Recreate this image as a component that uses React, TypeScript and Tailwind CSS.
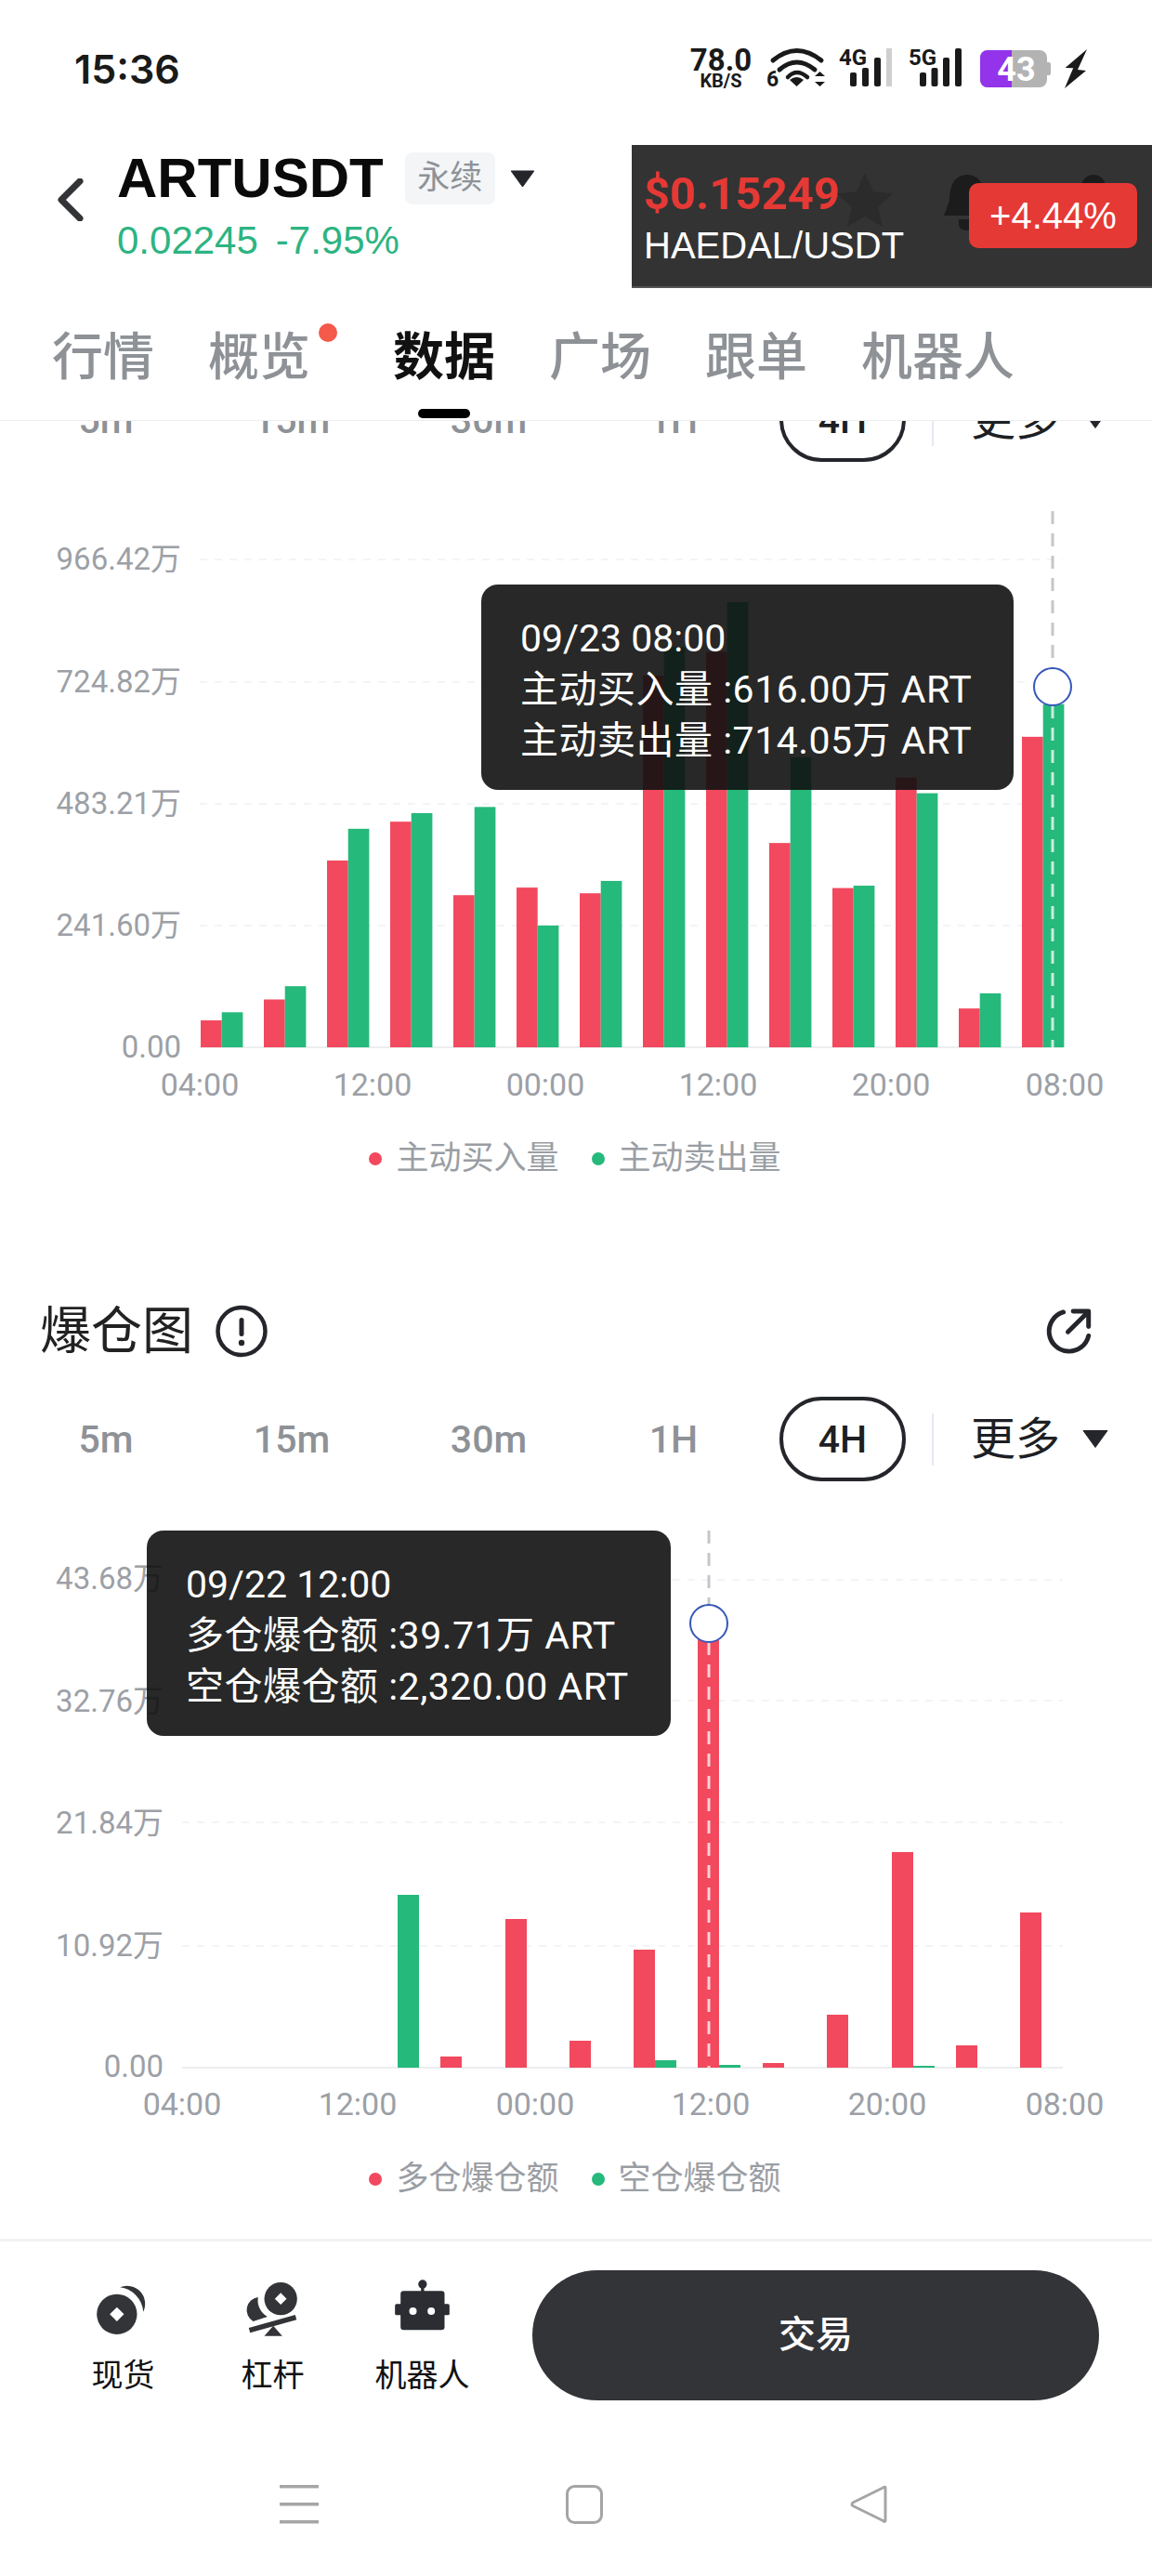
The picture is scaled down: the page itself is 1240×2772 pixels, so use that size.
import React from "react";

const RED = "#f2495e";
const GREEN = "#26b97c";

type Bar = { x: number; top: number; c: string };

const redX = [216, 284, 352, 420, 488, 556, 624, 692, 760, 828, 896, 964, 1032, 1100];
const rTop = [1172, 1128, 835, 753, 908, 892, 904, 445, 395, 798, 893, 660, 1147, 574];
const gTop = [1155, 1100, 768, 735, 722, 972, 878, 385, 290, 617, 888, 693, 1115, 505];
const toY = (v: number) => v / 1.96 + 500;

const bars1: Bar[] = redX.flatMap((x, i) => [
  { x, top: toY(rTop[i]), c: RED },
  { x: x + 22.7, top: toY(gTop[i]), c: GREEN },
]);

const bars2: Bar[] = [
  { x: 428, top: 2039, c: GREEN },
  { x: 474, top: 2213, c: RED },
  { x: 544, top: 2065, c: RED },
  { x: 613, top: 2196, c: RED },
  { x: 682, top: 2098, c: RED },
  { x: 705, top: 2217, c: GREEN },
  { x: 751, top: 1745, c: RED },
  { x: 774, top: 2222, c: GREEN },
  { x: 821, top: 2220, c: RED },
  { x: 890, top: 2168, c: RED },
  { x: 960, top: 1993, c: RED },
  { x: 983, top: 2223, c: GREEN },
  { x: 1029, top: 2201, c: RED },
  { x: 1098, top: 2058, c: RED },
];

function Chart(props: {
  top: number;
  height: number;
  base: number;
  gridLeft: number;
  labelRight: number;
  yLabels: { t: string; y: number }[];
  grid: number[];
  xLabels: { t: string; x: number }[];
  xY: number;
  bars: Bar[];
  barW: number;
  cross: { x: number; top: number; cy: number };
  tooltip: { left: number; top: number; width: number; height: number; lines: string[] };
}) {
  const { top, height, base, gridLeft, labelRight, yLabels, grid, xLabels, xY, bars, barW, cross, tooltip } = props;
  return (
    <div className="relative">
      <svg width={1240} height={height} viewBox={`0 ${top} 1240 ${height}`} className="block">
        {grid.map((y) => (
          <line key={y} x1={gridLeft} x2={1144} y1={y} y2={y} stroke="#f0f1f3" strokeWidth={1.5} strokeDasharray="8 8" />
        ))}
        <line x1={gridLeft} x2={1144} y1={base} y2={base} stroke="#eceef0" strokeWidth={2} />
        {yLabels.map((l) => (
          <text key={l.t} x={labelRight} y={l.y + 12} textAnchor="end" fontSize={33} fill="#9ca0a6">
            {l.t}
          </text>
        ))}
        {xLabels.map((l, i) => (
          <text key={i} x={l.x} y={xY + 13} textAnchor="middle" fontSize={34} fill="#9ca0a6">
            {l.t}
          </text>
        ))}
        {bars.map((b, i) => (
          <rect key={i} x={b.x} y={b.top} width={barW} height={base - b.top} fill={b.c} />
        ))}
        <line x1={cross.x} x2={cross.x} y1={cross.top} y2={cross.cy - 20} stroke="#c4c6ca" strokeWidth={3} strokeDasharray="14 10" />
        <line x1={cross.x} x2={cross.x} y1={cross.cy + 20} y2={base} stroke="#ffffff" strokeOpacity={0.75} strokeWidth={3} strokeDasharray="14 10" />
        <circle cx={cross.x} cy={cross.cy} r={20} fill="#ffffff" stroke="#3557b7" strokeWidth={2} />
      </svg>
      <div
        className="absolute rounded-[18px] bg-[#111111]/90 pl-[42px] pt-[31px] text-[41px] leading-[55px] text-white"
        style={{ left: tooltip.left, top: tooltip.top, width: tooltip.width, height: tooltip.height }}
      >
        {tooltip.lines.map((l, i) => (
          <div key={l} className={i === 0 ? "whitespace-nowrap" : "whitespace-nowrap tracking-[0.5px]"}>
            {l}
          </div>
        ))}
      </div>
    </div>
  );
}

function Legend({ a, b }: { a: string; b: string }) {
  return (
    <div className="flex h-[72px] items-center justify-center pr-[2px] pt-[2px] text-[35px] text-[#9a9ea4]">
      <span className="h-[14px] w-[14px] rounded-full bg-[#f2495e]" />
      <span className="ml-[15px]">{a}</span>
      <span className="ml-[35px] h-[14px] w-[14px] rounded-full bg-[#26b97c]" />
      <span className="ml-[15px]">{b}</span>
    </div>
  );
}

function Caret({ w, h }: { w: number; h: number }) {
  return (
    <svg width={w} height={h} viewBox="0 0 28 20" className="block">
      <path d="M1 1 H27 L14 19 Z" fill="#24262b" stroke="#24262b" strokeWidth={1} strokeLinejoin="round" />
    </svg>
  );
}

function Selector() {
  return (
    <div className="flex h-[91px] items-center pl-[14px] text-[41px] font-medium text-[#8e9297]">
      <div className="w-[200px] pt-[2px] text-center">5m</div>
      <div className="w-[200px] pt-[2px] text-center">15m</div>
      <div className="ml-[12px] w-[200px] pt-[2px] text-center">30m</div>
      <div className="w-[198px] pt-[2px] text-center">1H</div>
      <div className="ml-[15px] flex h-[91px] w-[136px] items-center justify-center rounded-full border-[4px] border-[#24262b] pt-[2px] text-[#1d1f24]">
        4H
      </div>
      <div className="ml-[28px] h-[56px] w-[2px] bg-[#e6e8f2]" />
      <div className="ml-[40px] text-[48px] font-normal text-[#1d1f24]">更多</div>
      <div className="ml-[24px]">
        <Caret w={28} h={21} />
      </div>
    </div>
  );
}

function StatusIcons() {
  return (
    <div className="ml-auto flex items-center pr-[68px]">
      <div className="flex w-[68px] flex-col items-center font-bold text-[#1a1a1a]">
        <span className="text-[33px] leading-[27px]">78.0</span>
        <span className="text-[20px] leading-[19px]">KB/S</span>
      </div>
      <svg width={70} height={70} className="ml-[10px] block" fill="none" stroke="#1a1a1a" strokeLinecap="round">
        <path d="M12 26 Q37.5 5 64 26" strokeWidth={5} />
        <path d="M19 36 Q37.5 20 57 36" strokeWidth={5} />
        <path d="M28 44 Q37.5 34 49 44" strokeWidth={4.5} />
        <path d="M30 47 Q37.5 41 45 47 L37.5 54 Z" fill="#1a1a1a" stroke="none" />
        <path d="M57 43 L62.5 38 L68 43 Z M57 49 L68 49 L62.5 54 Z" fill="#1a1a1a" stroke="none" />
        <text x={5} y={54} fontSize={23} fontWeight={700} fill="#1a1a1a" stroke="none">
          6
        </text>
      </svg>
      <svg width={62} height={70} className="ml-[10px] block">
        <text x={3} y={31} fontSize={24} fontWeight={700} fill="#1a1a1a">
          4G
        </text>
        <rect x={15} y={39} width={7} height={15} rx={2} fill="#1a1a1a" />
        <rect x={28} y={34} width={7} height={20} rx={2} fill="#1a1a1a" />
        <rect x={41} y={23} width={7} height={31} rx={2} fill="#1a1a1a" />
        <rect x={54} y={13} width={6} height={41} fill="#cfcfcf" />
      </svg>
      <svg width={62} height={70} className="ml-[13px] block">
        <text x={3} y={31} fontSize={24} fontWeight={700} fill="#1a1a1a">
          5G
        </text>
        <rect x={15} y={39} width={7} height={15} rx={2} fill="#1a1a1a" />
        <rect x={27.5} y={34} width={7} height={20} rx={2} fill="#1a1a1a" />
        <rect x={40} y={23} width={7} height={31} rx={2} fill="#1a1a1a" />
        <rect x={53} y={13} width={7} height={41} rx={2} fill="#1a1a1a" />
      </svg>
      <svg width={80} height={70} className="ml-[16px] block">
        <rect x={2} y={15} width={72} height={40} rx={8} fill="#b3b3b3" />
        <path d="M74 28 h2 a2 2 0 0 1 2 2 v10 a2 2 0 0 1 -2 2 h-2 Z" fill="#b3b3b3" />
        <path d="M36 15 H10 a8 8 0 0 0 -8 8 V47 a8 8 0 0 0 8 8 H36 Z" fill="#9333ea" />
        <text x={41} y={48} textAnchor="middle" fontSize={36} fontWeight={700} fill="#ffffff">
          43
        </text>
      </svg>
      <svg width={28} height={70} className="ml-[11px] block">
        <path d="M26 14 L2.6 34 L11.2 34.3 L2 56 L25 37 L16 36 Z" fill="#1a1a1a" />
      </svg>
    </div>
  );
}

function Header() {
  const tabs = ["行情", "概览", "数据", "广场", "跟单", "机器人"];
  return (
    <div className="relative z-10 h-[453px] border-b-[1px] border-[#eeeeee] bg-white">
      <div className="flex h-[148px] items-center">
        <div className="pl-[80px] font-['Inter',sans-serif] text-[43px] font-semibold text-[#1a1a1a]">15:36</div>
        <StatusIcons />
      </div>
      <div className="mt-[12px] flex items-center pl-[61px]">
        <svg width={30} height={46} viewBox="0 0 30 46" className="mb-[20px] block" fill="none">
          <path d="M25 3 L5 23 L25 43" stroke="#333438" strokeWidth={7} strokeLinejoin="round" strokeLinecap="round" />
        </svg>
        <div className="ml-[35px]">
          <div className="flex h-[64px] items-center">
            <span className="font-['Liberation_Sans',sans-serif] text-[60px] font-bold leading-[64px] text-[#0a0a0a]">ARTUSDT</span>
            <span className="ml-[23px] flex h-[56px] w-[97px] items-center justify-center rounded-[8px] bg-[#f3f5f7] text-[35px] text-[#8e9297]">
              永续
            </span>
            <span className="ml-[16px]">
              <Caret w={27} h={19} />
            </span>
          </div>
          <div className="flex h-[66px] items-center pt-[2px] font-['Liberation_Sans',sans-serif] text-[42px] text-[#2db482]">
            <span>0.02245</span>
            <span className="ml-[19px]">-7.95%</span>
          </div>
        </div>
      </div>
      <div className="mt-[63px] flex items-start gap-[58px] pl-[56px] text-[55px] font-medium leading-[62px] text-[#8e9297]">
        {tabs.map((t) => (
          <div key={t} className={t === "概览" ? "relative mr-[31px]" : "relative flex flex-col items-center"}>
            <span className={t === "数据" ? "font-bold text-[#111111]" : ""}>{t}</span>
            {t === "概览" && <span className="absolute right-[-29px] top-[-5px] h-[20px] w-[20px] rounded-full bg-[#f4594a]" />}
            {t === "数据" && <span className="mt-[25px] h-[10px] w-[56px] rounded-[5px] bg-black" />}
          </div>
        ))}
      </div>
    </div>
  );
}

function Overlay() {
  return (
    <div className="absolute left-[680px] top-[156px] z-20 h-[154px] w-[560px] overflow-hidden border-b-[2px] border-[#555555] bg-[#333333] pl-[13px] pt-[28px]">
      <div className="font-['Roboto',sans-serif] text-[49px] font-bold leading-[50px] text-[#e53935]">$0.15249</div>
      <div className="mt-[5px] font-['Liberation_Sans',sans-serif] text-[40px] leading-[50px] text-white">HAEDAL/USDT</div>
      <svg width={62} height={58} viewBox="0 0 24 23" className="absolute left-[220px] top-[30px]">
        <path d="M12 0 L15.6 8 L24 8.8 L17.6 14.4 L19.5 23 L12 18.5 L4.5 23 L6.4 14.4 L0 8.8 L8.4 8 Z" fill="#2b2b2b" />
      </svg>
      <svg width={50} height={60} viewBox="0 0 50 60" className="absolute left-[336px] top-[32px]">
        <path d="M25 0 C40 0 44 14 44 28 L50 44 H0 L6 28 C6 14 10 0 25 0 Z M16 48 H34 V54 A9 6 0 0 1 16 54 Z" fill="#1c1c1c" />
      </svg>
      <div className="absolute left-[484px] top-[32px] h-[30px] w-[26px] rounded-full bg-[#1c1c1c]" />
      <div className="absolute left-[363px] top-[41px] flex h-[70px] w-[181px] items-center justify-center rounded-[10px] bg-[#e53935] font-['Liberation_Sans',sans-serif] text-[40px] text-white">
        +4.44%
      </div>
    </div>
  );
}

function BottomBar() {
  return (
    <div className="h-[363px] border-t-[3px] border-[#f2f2f2] bg-white">
      <div className="flex pl-[52px] pt-[31px]">
        <div className="flex w-[161px] flex-col items-center">
          <svg width={67} height={64} viewBox="30 40 200 192" className="mt-[9px] block">
            <circle cx={110} cy={155} r={65} fill="#333438" />
            <path d="M110 132 L133 155 L110 178 L87 155 Z" fill="#ffffff" />
            <path d="M120 68 A58 58 0 0 1 195 147 A86 86 0 0 0 120 68 Z" fill="#333438" />
          </svg>
          <span className="mt-[20px] text-[34px] leading-[40px] text-[#111111]">现货</span>
        </div>
        <div className="flex w-[161px] flex-col items-center">
          <svg width={67} height={64} viewBox="515 40 200 192" className="mt-[9px] block">
            <circle cx={641} cy={105} r={53} fill="#333438" />
            <path d="M641 86 L660 105 L641 124 L622 105 Z" fill="#ffffff" />
            <path d="M568 100 A42 42 0 0 0 552 178 L598 163 A60 60 0 0 1 568 100 Z" fill="#333438" />
            <path d="M540 207 L690 165" stroke="#333438" strokeWidth={16} />
            <path d="M588 225 H646 L617 192 Z" fill="#333438" />
          </svg>
          <span className="mt-[20px] text-[34px] leading-[40px] text-[#111111]">杠杆</span>
        </div>
        <div className="flex w-[161px] flex-col items-center">
          <svg width={67} height={64} viewBox="995 40 200 192" className="mt-[9px] block">
            <circle cx={1096} cy={58} r={14} fill="#2b2d33" />
            <rect x={1091} y={60} width={10} height={24} fill="#2b2d33" />
            <rect x={1025} y={80} width={142} height={126} rx={10} fill="#2b2d33" />
            <rect x={1007} y={122} width={176} height={36} rx={5} fill="#2b2d33" />
            <circle cx={1065} cy={145} r={12} fill="#ffffff" />
            <circle cx={1124} cy={145} r={12} fill="#ffffff" />
          </svg>
          <span className="mt-[20px] text-[34px] leading-[40px] text-[#111111]">机器人</span>
        </div>
        <div className="ml-[38px] flex h-[140px] w-[610px] items-center justify-center rounded-full bg-[#333438] text-[40px] font-medium text-white">
          交易
        </div>
      </div>
      <div className="mt-[91px] flex gap-[266px] pl-[301px]">
        <svg width={42} height={42} className="block">
          <rect x={0} y={0} width={42} height={3.5} fill="#a5a5a5" />
          <rect x={0} y={19} width={42} height={3.5} fill="#a5a5a5" />
          <rect x={0} y={38} width={42} height={3.5} fill="#a5a5a5" />
        </svg>
        <svg width={40} height={42} className="block">
          <rect x={1.5} y={1.5} width={37} height={39} rx={8} fill="none" stroke="#a5a5a5" strokeWidth={3} />
        </svg>
        <svg width={40} height={42} className="block">
          <path d="M38 3 V38 Q38 40.5 35.5 38.5 L3 22.5 Q1 21 3 19 L35.5 3 Q38 1.5 38 3 Z" fill="none" stroke="#a5a5a5" strokeWidth={3} strokeLinejoin="round" />
        </svg>
      </div>
    </div>
  );
}

export default function App() {
  return (
    <div className="relative flex h-[2772px] w-[1240px] flex-col overflow-hidden bg-white font-['Roboto','Noto_Sans_CJK_SC',sans-serif]">
      <Header />
      <Overlay />
      <div className="h-[1956px] overflow-hidden">
        <div className="-mt-[47px]">
          <Selector />
          <Chart
            top={497}
            height={713}
            base={1127}
            gridLeft={215}
            labelRight={195}
            grid={[602, 734, 865, 996]}
            yLabels={[
              { t: "966.42万", y: 601 },
              { t: "724.82万", y: 733 },
              { t: "483.21万", y: 864 },
              { t: "241.60万", y: 995 },
              { t: "0.00", y: 1126 },
            ]}
            xY={1166}
            xLabels={[
              { t: "04:00", x: 215 },
              { t: "12:00", x: 401 },
              { t: "00:00", x: 587 },
              { t: "12:00", x: 773 },
              { t: "20:00", x: 959 },
              { t: "08:00", x: 1146 },
            ]}
            bars={bars1}
            barW={22.7}
            cross={{ x: 1133, top: 550, cy: 739 }}
            tooltip={{
              left: 518,
              top: 132,
              width: 573,
              height: 221,
              lines: ["09/23 08:00", "主动买入量 :616.00万 ART", "主动卖出量 :714.05万 ART"],
            }}
          />
          <Legend a="主动买入量" b="主动卖出量" />
          <div className="mt-[122px] flex h-[57px] items-center pl-[43px]">
            <span className="text-[55px] font-normal text-[#222222]">爆仓图</span>
            <svg width={56} height={57} viewBox="0 0 56 57" className="ml-[24px] block">
              <circle cx={28} cy={28.5} r={25.5} fill="none" stroke="#24262b" strokeWidth={4.5} />
              <rect x={25.5} y={14} width={5} height={20} rx={2.5} fill="#24262b" />
              <circle cx={28} cy={41} r={3.2} fill="#24262b" />
            </svg>
            <svg width={57} height={53} viewBox="70 50 170 160" fill="none" className="ml-auto mr-[62px] block">
              <path d="M140 68 A65 65 0 1 0 222 145" stroke="#24262b" strokeWidth={15} strokeLinecap="round" />
              <path d="M155 132 L220 68 M172 65 H222 V115" stroke="#24262b" strokeWidth={15} strokeLinecap="round" strokeLinejoin="round" />
            </svg>
          </div>
          <div className="mt-[42px]">
            <Selector />
          </div>
          <Chart
            top={1594}
            height={714}
            base={2225}
            gridLeft={196}
            labelRight={176}
            grid={[1700, 1830, 1961, 2094]}
            yLabels={[
              { t: "43.68万", y: 1698 },
              { t: "32.76万", y: 1830 },
              { t: "21.84万", y: 1961 },
              { t: "10.92万", y: 2093 },
              { t: "0.00", y: 2223 },
            ]}
            xY={2263}
            xLabels={[
              { t: "04:00", x: 196 },
              { t: "12:00", x: 385 },
              { t: "00:00", x: 576 },
              { t: "12:00", x: 765 },
              { t: "20:00", x: 955 },
              { t: "08:00", x: 1146 },
            ]}
            bars={bars2}
            barW={23}
            cross={{ x: 763, top: 1647, cy: 1747 }}
            tooltip={{
              left: 158,
              top: 53,
              width: 564,
              height: 221,
              lines: ["09/22 12:00", "多仓爆仓额 :39.71万 ART", "空仓爆仓额 :2,320.00 ART"],
            }}
          />
          <Legend a="多仓爆仓额" b="空仓爆仓额" />
        </div>
      </div>
      <BottomBar />
    </div>
  );
}
